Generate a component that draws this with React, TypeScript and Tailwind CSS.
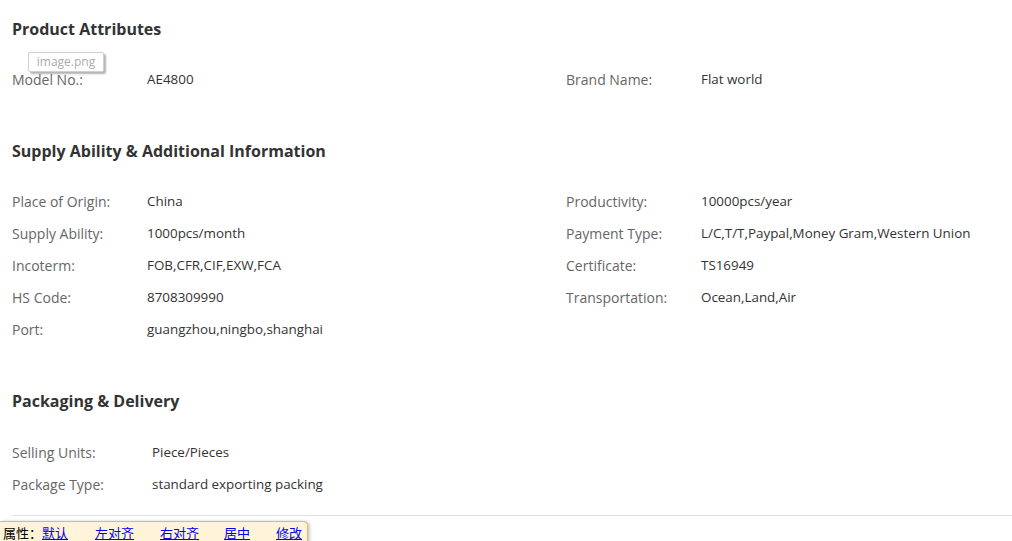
import React from "react";

type Row = { label: string; value: string };

const supplyLeft: Row[] = [
  { label: "Place of Origin:", value: "China" },
  { label: "Supply Ability:", value: "1000pcs/month" },
  { label: "Incoterm:", value: "FOB,CFR,CIF,EXW,FCA" },
  { label: "HS Code:", value: "8708309990" },
  { label: "Port:", value: "guangzhou,ningbo,shanghai" },
];

const supplyRight: Row[] = [
  { label: "Productivity:", value: "10000pcs/year" },
  { label: "Payment Type:", value: "L/C,T/T,Paypal,Money Gram,Western Union" },
  { label: "Certificate:", value: "TS16949" },
  { label: "Transportation:", value: "Ocean,Land,Air" },
];

function Attr({ label, value, wide }: Row & { wide?: boolean }) {
  return (
    <div className="flex h-8 items-center">
      <span className={(wide ? "w-[140px]" : "w-[135px]") + " shrink-0 text-[14px] text-[#666]"}>{label}</span>
      <span className="text-[13.4px] text-[#333]">{value}</span>
    </div>
  );
}

function Heading({ children }: { children: React.ReactNode }) {
  return <h2 className="flex h-6 items-center text-[16px] font-bold text-[#333]">{children}</h2>;
}

export default function App() {
  return (
    <div className="relative h-[541px] w-[1012px] overflow-hidden bg-white font-['Open_Sans',sans-serif] text-[13px]">
      <div className="pl-3 pt-[17px]">
        <Heading>Product Attributes</Heading>
        <div className="mt-[22px] grid grid-cols-[554px_1fr]">
          <Attr label="Model No.:" value="AE4800" />
          <Attr label="Brand Name:" value="Flat world" />
        </div>

        <div className="mt-[44px]">
          <Heading>Supply Ability &amp; Additional Information</Heading>
        </div>
        <div className="mt-[22px] grid grid-cols-[554px_1fr]">
          <div>
            {supplyLeft.map((r) => (
              <Attr key={r.label} {...r} />
            ))}
          </div>
          <div>
            {supplyRight.map((r) => (
              <Attr key={r.label} {...r} />
            ))}
          </div>
        </div>

        <div className="mt-[44px]">
          <Heading>Packaging &amp; Delivery</Heading>
        </div>
        <div className="mt-[23px]">
          <Attr wide label="Selling Units:" value="Piece/Pieces" />
          <Attr wide label="Package Type:" value="standard exporting packing" />
        </div>
        <div className="mt-[15px] border-t border-[#e2e2e2]" />
      </div>

      <div className="mt-[5px] flex h-6 w-[308px] items-start rounded-tr-[5px] border-t border-r border-[#e3b96e] bg-[#fdf4d9] pl-[3px] pt-[3px] font-['Noto_Sans_CJK_SC',sans-serif] text-[13px] leading-[16px] text-black shadow-[2px_0_3px_rgba(0,0,0,0.2)]">
        <span className="w-[39px]">属性：</span>
        <a className="w-[53px] text-[#0000ee] underline">默认</a>
        <a className="w-[65px] text-[#0000ee] underline">左对齐</a>
        <a className="w-[64px] text-[#0000ee] underline">右对齐</a>
        <a className="w-[52px] text-[#0000ee] underline">居中</a>
        <a className="text-[#0000ee] underline">修改</a>
      </div>

      <div className="absolute left-[28px] top-[52px] flex h-5 w-[76px] items-center justify-center rounded-[2px] border border-[#d0d0d0] bg-white text-[12px] text-[#aaa] shadow-[2px_2px_2px_rgba(0,0,0,0.3)]">
        image.png
      </div>
    </div>
  );
}
